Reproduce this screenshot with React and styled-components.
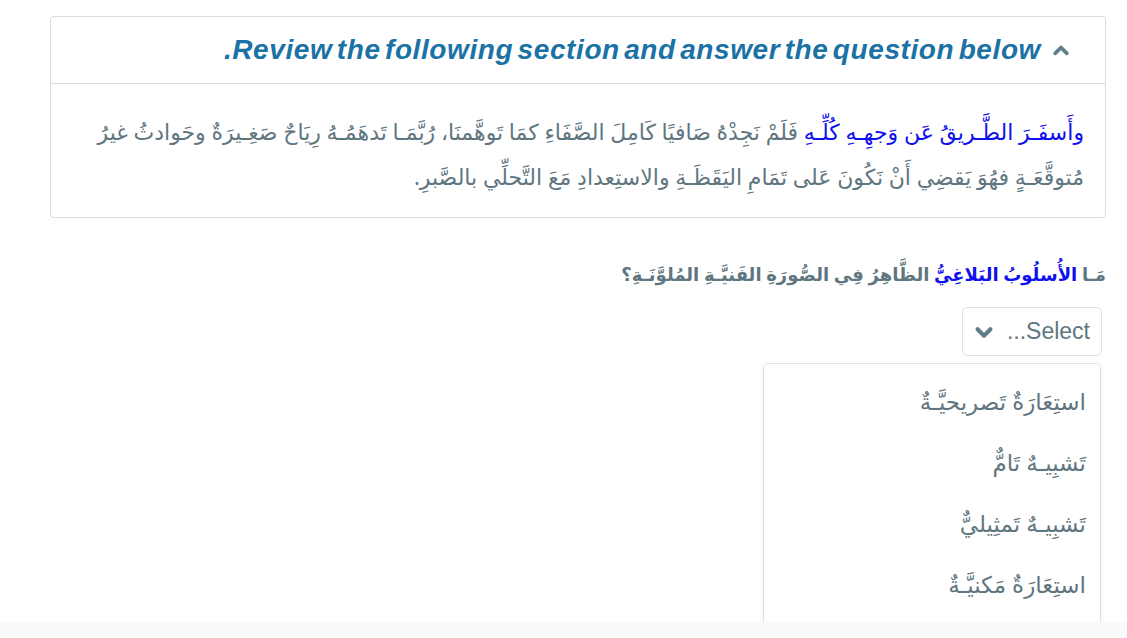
import styled, { createGlobalStyle } from 'styled-components';

const GlobalStyle = createGlobalStyle`
  html, body {
    margin: 0;
    padding: 0;
    background: #ffffff;
  }
  body {
    font-family: "Noto Sans", "DejaVu Sans", sans-serif;
  }
`;

const Page = styled.div`
  height: 638px;
  display: flex;
  flex-direction: column;
  overflow: hidden;
`;

const Content = styled.div`
  flex: 1;
  padding: 16px 21px 0 50px;
  display: flex;
  flex-direction: column;
  min-height: 0;
`;

const Card = styled.section`
  border: 1px solid #d9dcde;
  border-radius: 4px;
  background: #fff;
`;

const CardHeader = styled.div`
  direction: rtl;
  height: 66px;
  display: flex;
  align-items: center;
  gap: 10px;
  padding: 0 34px 0 20px;
  border-bottom: 1px solid #d9dcde;
`;

const Title = styled.h2`
  margin: 0;
  font-family: "Liberation Sans", Arial, sans-serif;
  font-size: 28px;
  font-weight: 700;
  font-style: italic;
  letter-spacing: 0.6px;
  word-spacing: -4px;
  color: #1b72a5;
`;

const Passage = styled.p`
  direction: rtl;
  margin: 0;
  padding: 25px 21px 18px 30px;
  font-size: 22px;
  line-height: 45px;
  color: #5f7680;
`;

const Mark = styled.span`
  color: #1010ee;
`;

const Question = styled.h3`
  direction: rtl;
  margin: 44px 0 0;
  font-size: 18px;
  font-weight: 700;
  color: #5f7680;
`;

const SelectWrap = styled.div`
  align-self: flex-end;
  margin-right: 4px;
  margin-top: 21px;
  display: flex;
  flex-direction: column;
  align-items: flex-end;
`;

const SelectBox = styled.button`
  direction: rtl;
  width: 140px;
  height: 49px;
  display: flex;
  align-items: center;
  gap: 12px;
  padding: 0 11px 0 8px;
  border: 1px solid #dfe3e5;
  border-radius: 5px;
  background: #fff;
  font-family: "Liberation Sans", Arial, sans-serif;
  font-size: 23px;
  color: #5f7680;
`;

const Menu = styled.ul`
  direction: rtl;
  list-style: none;
  margin: 7px 1px 0 0;
  padding: 6px 14px 0 0;
  width: 322px;
  height: 258px;
  border: 1px solid #dfe3e5;
  border-radius: 5px;
  background: #fff;
  box-shadow: 0 2px 6px rgba(0, 0, 0, 0.06);
`;

const MenuItem = styled.li`
  height: 61px;
  display: flex;
  align-items: center;
  font-size: 23px;
  color: #5f7680;
`;

const Footer = styled.div`
  height: 16px;
  background: #f9fbfb;
  flex-shrink: 0;
`;

const Chevron = ({ up, size = 18 }) => (
  <svg width={size} height={size} viewBox="0 0 24 24" fill="none" stroke="#607d8b" strokeWidth="4.5" strokeLinecap="round" strokeLinejoin="round">
    <polyline points={up ? '5 16 12 9 19 16' : '5 9 12 16 19 9'} />
  </svg>
);

const options = [
  'استِعَارَةٌ تَصريحيَّـةٌ',
  'تَشبِيـهٌ تَامٌّ',
  'تَشبِيـهٌ تَمثِيليٌّ',
  'استِعَارَةٌ مَكنيَّـةٌ',
];

export default function App() {
  return (
    <Page>
      <GlobalStyle />
      <Content>
        <Card>
          <CardHeader>
            <Chevron up size={20} />
            <Title>Review the following section and answer the question below.</Title>
          </CardHeader>
          <Passage>
            <Mark>وأَسفَـرَ الطَّـريقُ عَن وَجهِـهِ كُلِّـهِ</Mark> فَلَمْ نَجِدْهُ صَافيًا كَامِلَ الصَّفَاءِ كمَا تَوهَّمنَا، رُبَّمَـا تَدهَمُـهُ رِيَاحٌ صَغِـيرَةٌ وحَوادثُ غيرُ مُتوقَّعَـةٍ فهُوَ يَقضِي أَنْ نَكُونَ عَلى تَمَامِ اليَقَظَـةِ والاستِعدادِ مَعَ التَّحلِّي بالصَّبرِ.
          </Passage>
        </Card>
        <Question>
          مَـا <Mark>الأُسلُوبُ البَلاغِيُّ</Mark> الظَّاهِرُ فِي الصُّورَةِ الفَنيَّـةِ المُلوَّنَـةِ؟
        </Question>
        <SelectWrap>
          <SelectBox>
            <span>Select...</span>
            <Chevron size={22} />
          </SelectBox>
          <Menu>
            {options.map((o) => (
              <MenuItem key={o}>{o}</MenuItem>
            ))}
          </Menu>
        </SelectWrap>
      </Content>
      <Footer />
    </Page>
  );
}
